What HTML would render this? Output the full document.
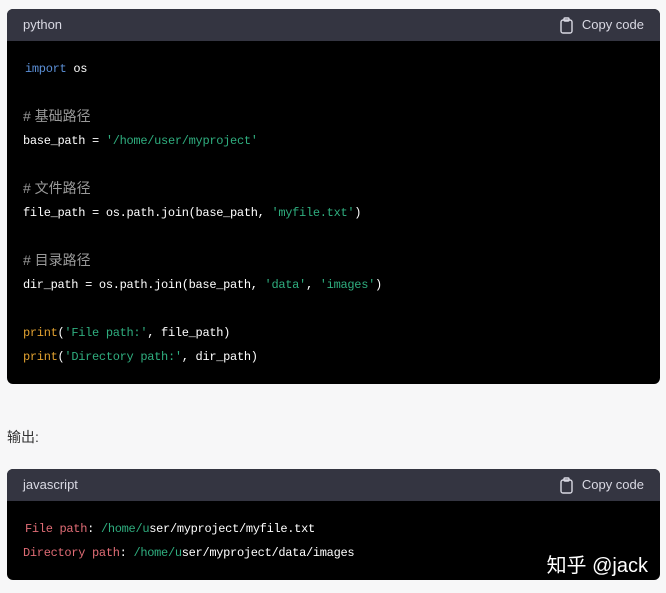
<!DOCTYPE html>
<html><head><meta charset="utf-8"><style>
body{margin:0;background:#f7f7f8;width:666px;height:593px;overflow:hidden;position:relative;font-family:"Liberation Sans","Noto Sans CJK SC",sans-serif;}
.blk{position:absolute;left:7px;width:653px;background:#000;border-radius:6px;overflow:hidden;}
.hd{height:32px;background:#343541;color:#d9d9e3;font-size:13px;position:relative;}
.hd .l{position:absolute;left:16px;top:8px;}
.hd .r{position:absolute;right:16px;top:8px;}
.hd svg{position:absolute;left:-23px;top:0px;}
.code{position:relative;font-family:"Liberation Mono","Noto Sans CJK SC",monospace;font-size:12px;letter-spacing:-0.3px;color:#fff;line-height:16px;}
.ln{position:absolute;left:16px;white-space:pre;}
.k{color:#5b8fd6}.s{color:#2fae7f}.c{color:#9a9a9a;font-family:"Liberation Sans","Noto Sans CJK SC",sans-serif;font-size:14px;letter-spacing:0}.f{color:#e0a030}.r2{color:#e06c75}
.cn{position:absolute;font-size:14px;color:#333;}
</style></head><body>
<div class="blk" style="top:9px;height:375px">
 <div class="hd"><span class="l">python</span><span class="r"><svg width="16" height="17" viewBox="0 0 16 17" fill="none" stroke="#d9d9e3" stroke-width="1.4"><rect x="2" y="3" width="11" height="13" rx="2"/><rect x="5" y="1" width="5" height="3" rx="1"/></svg>Copy code</span></div>
 <div class="code">
  <div class="ln" style="top:20px;left:18px"><span class="k">import</span> os</div>
  <div class="ln c" style="top:67px"># 基础路径</div>
  <div class="ln" style="top:92px">base_path = <span class="s">'/home/user/myproject'</span></div>
  <div class="ln c" style="top:139px"># 文件路径</div>
  <div class="ln" style="top:164px">file_path = os.path.join(base_path, <span class="s">'myfile.txt'</span>)</div>
  <div class="ln c" style="top:211px"># 目录路径</div>
  <div class="ln" style="top:236px">dir_path = os.path.join(base_path, <span class="s">'data'</span>, <span class="s">'images'</span>)</div>
  <div class="ln" style="top:284px"><span class="f">print</span>(<span class="s">'File path:'</span>, file_path)</div>
  <div class="ln" style="top:308px"><span class="f">print</span>(<span class="s">'Directory path:'</span>, dir_path)</div>
 </div>
</div>
<div class="cn" style="left:7px;top:427px">输出:</div>
<div class="blk" style="top:469px;height:111px">
 <div class="hd"><span class="l">javascript</span><span class="r"><svg width="16" height="17" viewBox="0 0 16 17" fill="none" stroke="#d9d9e3" stroke-width="1.4"><rect x="2" y="3" width="11" height="13" rx="2"/><rect x="5" y="1" width="5" height="3" rx="1"/></svg>Copy code</span></div>
 <div class="code">
  <div class="ln" style="top:20px;left:18px"><span class="r2">File path</span>: <span class="s">/home/u</span>ser/myproject/myfile.txt</div>
  <div class="ln" style="top:44px"><span class="r2">Directory path</span>: <span class="s">/home/u</span>ser/myproject/data/images</div>
 </div>
 <div style="position:absolute;right:12px;top:80px;color:#fff;font-size:20px">知乎 @jack</div>
</div>
</body></html>
